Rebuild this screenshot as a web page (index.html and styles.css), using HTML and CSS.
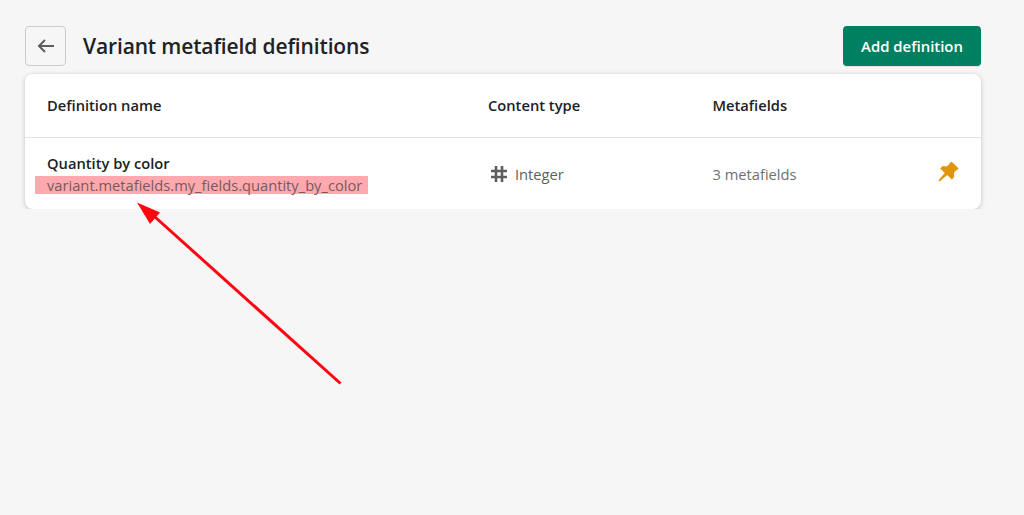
FILE: index.html

```html
<!DOCTYPE html>
<html lang="en">
<head>
    <meta charset="UTF-8">
    <meta name="viewport" content="width=device-width, initial-scale=1.0">
    <title>Variant metafield definitions</title>
    <link rel="stylesheet" href="styles.css">
</head>
<body>
    <div class="page">
        <div class="page-header">
            <button class="back-btn" aria-label="Back">
                <svg width="20" height="20" viewBox="0 0 20 20"><path d="M18 10H3M9 4l-6 6 6 6" fill="none" stroke="#5c5f62" stroke-width="2"/></svg>
            </button>
            <h1>Variant metafield definitions</h1>
            <button class="add-btn">Add definition</button>
        </div>

        <div class="card">
            <div class="row head-row">
                <div>Definition name</div>
                <div>Content type</div>
                <div>Metafields</div>
            </div>
            <div class="row body-row">
                <div>
                    <div class="def-name">Quantity by color</div>
                    <div class="def-key"><span>variant.metafields.my_fields.quantity_by_color</span></div>
                </div>
                <div class="type-cell">
                    <svg width="18" height="18" viewBox="0 0 18 18"><path d="M6 1v16M12 1v16M1 6h16M1 12h16" fill="none" stroke="#5c5f62" stroke-width="2.600"/></svg>
                    Integer
                </div>
                <div class="count-cell">3 metafields</div>
                <svg class="pin" width="22" height="22" viewBox="0 0 22 22"><path transform="translate(11 9) rotate(45)" d="M-5-8.500H5v2.500l-.5 .5 .5 3.500 3 2.500v3.500H1.500L.9 14H-.9l-.6-9.500H-8V1l3-2.500 .5-3.500-.5-.5z" fill="#e1950e"/></svg>
            </div>
        </div>
    </div>

    <!-- annotation arrow drawn on top of the screenshot -->
    <svg class="arrow" width="1024" height="515" viewBox="0 0 1024 515">
        <path d="M340.500 383.500L155 217" stroke="#fe0510" stroke-width="3" fill="none"/>
        <path d="M137 202.500L160 212.500 150 224z" fill="#fe0510"/>
    </svg>
</body>
</html>
```

FILE: styles.css

```css
body {
    font-family: "Open Sans", "Noto Sans", Arial, sans-serif;
    margin: 0;
    background-color: #f6f6f7;
    color: #202223;
    font-size: 14.7px;
    overflow: hidden;
}
.page {
    width: 956px;
    padding: 26px 0 0 25px;
}
.page-header {
    display: flex;
    align-items: center;
    height: 40px;
    margin-bottom: 8px;
}
.back-btn {
    width: 41px;
    height: 40px;
    display: flex;
    align-items: center;
    justify-content: center;
    padding: 0;
    background-color: #f6f6f7;
    border: 1px solid #c9cccf;
    border-radius: 4px;
}
h1 {
    flex: 1;
    margin: 0 0 0 17px;
    font-size: 21px;
    font-weight: 600;
    letter-spacing: -0.14px;
}
.add-btn {
    width: 138px;
    height: 40px;
    font-family: inherit;
    font-size: 14.9px;
    font-weight: 600;
    color: white;
    background-color: #008060;
    border: none;
    border-radius: 4px;
    box-shadow: 0 1px 0 rgba(0, 0, 0, 0.08);
}
.card {
    height: 135px;
    background-color: white;
    border-radius: 8px;
    box-shadow: 0 1px 4px rgba(63, 63, 68, 0.3);
}
.row {
    position: relative;
    display: grid;
    grid-template-columns: 441px 224.500px 1fr;
    align-items: center;
    padding-left: 22px;
}
.head-row {
    height: 61px;
    padding-bottom: 2px;
    font-weight: 600;
    border-bottom: 1px solid #e1e3e5;
}
.body-row {
    height: 71px;
}
.def-name {
    font-weight: 600;
    line-height: 18px;
}
.def-key {
    line-height: 18px;
    margin-top: 4px;
    margin-left: -12px;
}
.def-key span {
    display: inline-block;
    width: 333px;
    box-sizing: border-box;
    padding-left: 12px;
    color: #76595f;
    background-color: #ffa9ae;
    white-space: nowrap;
}
.type-cell {
    display: flex;
    align-items: center;
    gap: 7px;
    padding-left: 2px;
    color: #5c5f62;
}
.count-cell {
    color: #6d7175;
}
.pin {
    position: absolute;
    right: 21px;
    top: 24px;
}
.arrow {
    position: absolute;
    left: 0;
    top: 0;
    pointer-events: none;
}
```
